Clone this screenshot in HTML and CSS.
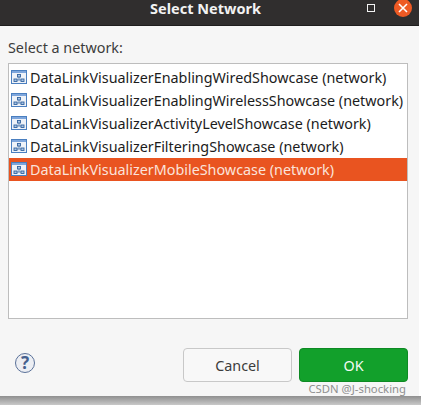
FILE: index.html
```html
<!DOCTYPE html>
<html lang="en">
<head>
  <meta charset="UTF-8">
  <title>Select Network</title>
  <link rel="stylesheet" href="styles.css">
</head>
<body>
  <div class="dialog">
    <div class="titlebar">
      <span class="title">Select Network</span>
      <div class="window-btns">
        <span class="maximize"></span>
        <span class="close">
          <svg width="10" height="10" viewBox="0 0 10 10"><path d="M1 1L9 9M9 1L1 9" stroke="#fff" stroke-width="1.6"/></svg>
        </span>
      </div>
    </div>
    <div class="content">
      <div class="prompt">Select a network:</div>
      <ul class="list">
        <li class="row"><svg class="net-icon" viewBox="0 0 16 16"><use href="#net"/></svg>DataLinkVisualizerEnablingWiredShowcase (network)</li>
        <li class="row"><svg class="net-icon" viewBox="0 0 16 16"><use href="#net"/></svg>DataLinkVisualizerEnablingWirelessShowcase (network)</li>
        <li class="row"><svg class="net-icon" viewBox="0 0 16 16"><use href="#net"/></svg>DataLinkVisualizerActivityLevelShowcase (network)</li>
        <li class="row"><svg class="net-icon" viewBox="0 0 16 16"><use href="#net"/></svg>DataLinkVisualizerFilteringShowcase (network)</li>
        <li class="row selected"><svg class="net-icon" viewBox="0 0 16 16"><use href="#net"/></svg>DataLinkVisualizerMobileShowcase (network)</li>
      </ul>
      <div class="footer">
        <span class="help">?</span>
        <div class="buttons">
          <button class="btn">Cancel</button>
          <button class="btn ok">OK</button>
        </div>
      </div>
    </div>
  </div>
  <div class="shadow"></div>
  <span class="watermark">CSDN @J-shocking</span>

  <svg width="0" height="0" class="defs">
    <symbol id="net" viewBox="0 0 16 16">
      <rect x="0.5" y="1.5" width="15" height="13" fill="#eef2f8" stroke="#4a7fc0"/>
      <rect x="1" y="2" width="14" height="2" fill="#7ea6dc"/>
      <path d="M4.5 11H11.5M8 8V11" stroke="#5f86b5" fill="none"/>
      <rect x="6.5" y="5.5" width="3" height="2.5" fill="#a9c4e4" stroke="#33649f" stroke-width="0.9"/>
      <rect x="3" y="10" width="3" height="2.5" fill="#a9c4e4" stroke="#33649f" stroke-width="0.9"/>
      <rect x="10" y="10" width="3" height="2.5" fill="#a9c4e4" stroke="#33649f" stroke-width="0.9"/>
    </symbol>
  </svg>
</body>
</html>
```

FILE: styles.css
```css
body {
  margin: 0;
  width: 421px;
  height: 405px;
  overflow: hidden;
  position: relative;
  background-color: #fff;
  font-family: "Noto Sans", sans-serif;
  font-size: 14.35px;
}

.defs {
  position: absolute;
}

.dialog {
  width: 419px;
  height: 396px;
  display: flex;
  flex-direction: column;
  background-color: #f6f6f6;
}

.shadow {
  height: 9px;
  background: linear-gradient(#8f8f8f, #c9c9c9);
}

.titlebar {
  height: 25px;
  flex-shrink: 0;
  position: relative;
  padding-right: 8px;
  background-color: #302e2e;
  border-bottom: 1px solid #1f1e1e;
  display: flex;
  align-items: flex-start;
  justify-content: center;
}

.title {
  color: #f2f2f2;
  font-weight: bold;
  font-size: 14.5px;
  line-height: 16px;
}

.window-btns {
  position: absolute;
  right: 7px;
  top: 0;
  height: 15px;
  display: flex;
  align-items: center;
  gap: 19px;
}

.maximize {
  width: 6px;
  height: 6px;
  border: 1px solid #f2f2f2;
}

.close {
  width: 18px;
  height: 18px;
  border-radius: 50%;
  background-color: #ee5a24;
  display: flex;
  align-items: center;
  justify-content: center;
}

.content {
  flex: 1;
  display: flex;
  flex-direction: column;
  padding: 12px 11px 0 8px;
}

.prompt {
  color: #3c3c3c;
  height: 25px;
  line-height: 20px;
}

.list {
  list-style: none;
  margin: 0;
  padding: 2px 0 0;
  height: 252px;
  background-color: #fff;
  border: 1px solid #bdbdbd;
}

.row {
  height: 23px;
  display: flex;
  align-items: center;
  gap: 3px;
  padding-left: 2px;
  color: #1c1c1c;
  white-space: nowrap;
}

.row.selected {
  background-color: #e95420;
  color: #fbe3da;
}

.net-icon {
  width: 16px;
  height: 16px;
  margin-top: -2px;
  flex-shrink: 0;
}

.footer {
  display: flex;
  align-items: center;
  justify-content: space-between;
  margin-top: 29px;
}

.help {
  width: 18px;
  height: 18px;
  margin-left: 7px;
  margin-bottom: 4px;
  border: 1px solid #5a7199;
  border-radius: 50%;
  background-color: #eceef3;
  color: #44608e;
  font-size: 17px;
  font-weight: bold;
  text-align: center;
  line-height: 18px;
}

.buttons {
  display: flex;
  gap: 7px;
}

.btn {
  width: 109px;
  height: 34px;
  font-family: inherit;
  font-size: 14.35px;
  color: #3c3c3c;
  background-color: #f8f8f8;
  border: 1px solid #c8c8c8;
  border-radius: 4px;
}

.btn.ok {
  color: #f4fbf4;
  background-color: #12a02b;
  border-color: #0e8a24;
}

.watermark {
  position: absolute;
  right: 15px;
  top: 381px;
  color: #8f8f8f;
  font-size: 11.3px;
}
```
